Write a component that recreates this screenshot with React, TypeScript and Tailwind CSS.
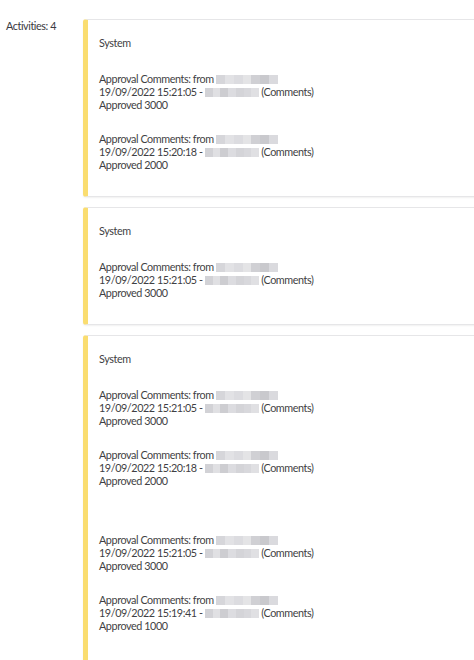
import React from 'react'

type Entry = { time: string; amount: string; gapBefore?: boolean }

const CARDS: Entry[][] = [
  [
    { time: '19/09/2022 15:21:05', amount: '3000' },
    { time: '19/09/2022 15:20:18', amount: '2000' },
  ],
  [{ time: '19/09/2022 15:21:05', amount: '3000' }],
  [
    { time: '19/09/2022 15:21:05', amount: '3000' },
    { time: '19/09/2022 15:20:18', amount: '2000' },
    { time: '19/09/2022 15:21:05', amount: '3000', gapBefore: true },
    { time: '19/09/2022 15:19:41', amount: '1000' },
  ],
]

// Pixelated redaction: a strip of gray cells of varying shade.
const SHADES_A = ['#d6d6da', '#e2e2e5', '#dcdce0', '#e4e4e6', '#d0d0d4', '#c9c9cd', '#dadade']
const SHADES_B = ['#d2d2d6', '#e0e0e3', '#cdcdd1', '#dcdce0', '#d4d4d8', '#d8d8dc', '#e0e0e3']

function Blur({ shades, width }: { shades: string[]; width: number }) {
  return (
    <span className="inline-flex h-[9px] align-[-1px]" style={{ width }}>
      {shades.map((c, i) => (
        <span key={i} className="h-full flex-1" style={{ backgroundColor: c }} />
      ))}
    </span>
  )
}

function Block({ entry, first }: { entry: Entry; first: boolean }) {
  const margin = first ? 'mt-[23px]' : entry.gapBefore ? 'mt-[46px]' : 'mt-[21px]'
  return (
    <div className={margin}>
      <div>
        Approval Comments: from <Blur shades={SHADES_A} width={62} />
      </div>
      <div>
        {entry.time} - <Blur shades={SHADES_B} width={54} /> (Comments)
      </div>
      <div>Approved {entry.amount}</div>
    </div>
  )
}

export default function App() {
  return (
    <div
      className="flex min-h-[660px] items-start bg-white pt-[19px] text-[10.8px] leading-[13px] tracking-[-0.42px] text-[#3f3f44]"
      style={{ fontFamily: '"Source Sans Pro", Lato, sans-serif' }}
    >
      <div className="w-[83px] shrink-0 pl-[6px] text-[#3a3a3f]">Activities: 4</div>
      <div className="-mr-4 flex flex-1 flex-col gap-[10px]">
        {CARDS.map((entries, i) => (
          <div
            key={i}
            className={
              'rounded-l-[3px] border border-[#e6e6e8] border-l-[5px] border-l-[#fadd70] bg-white pl-[11px] pt-[16px] shadow-[0_1px_2px_rgba(0,0,0,0.06)] ' +
              (i === 2 ? 'min-h-[330px] pb-[40px]' : 'pb-[25px]')
            }
          >
            <div>System</div>
            {entries.map((e, j) => (
              <Block key={j} entry={e} first={j === 0} />
            ))}
          </div>
        ))}
      </div>
    </div>
  )
}
